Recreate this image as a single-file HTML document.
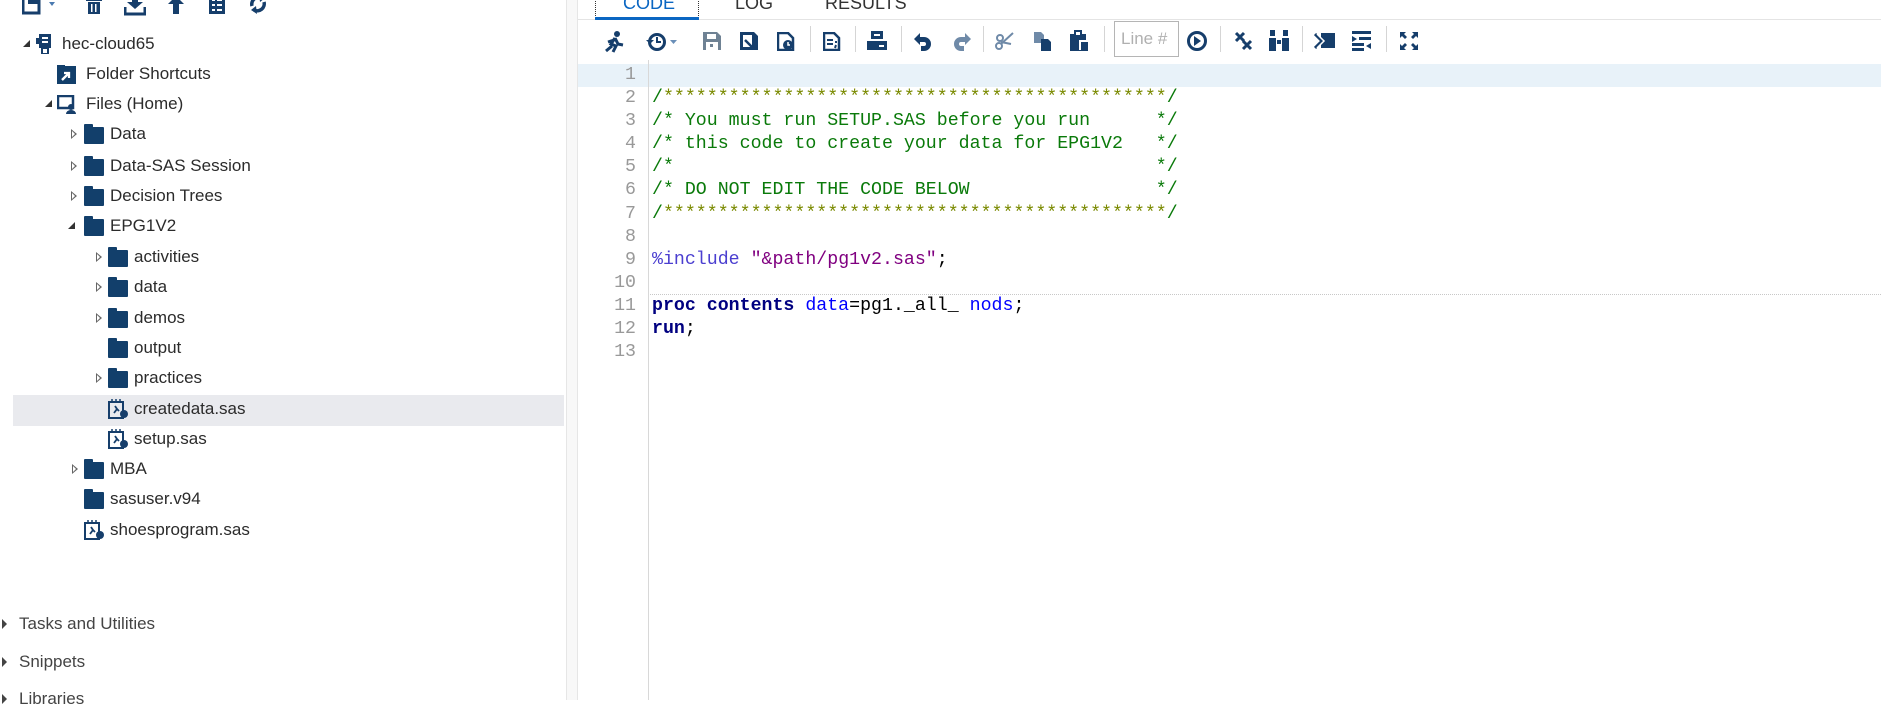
<!DOCTYPE html>
<html><head><meta charset="utf-8"><style>
*{margin:0;padding:0;box-sizing:border-box}
body{width:1881px;height:700px;overflow:hidden;background:#fff;position:relative;font-family:"Liberation Sans",sans-serif;color:#333}
.a{position:absolute}
.t{position:absolute;font-size:17px;line-height:20px;color:#2b2b2b;white-space:nowrap}
.ar{position:absolute;width:0;height:0}
.ro{border-top:5px solid transparent;border-bottom:5px solid transparent;border-left:6px solid #666}
.ro:after{content:"";position:absolute;left:-5px;top:-3px;border-top:3px solid transparent;border-bottom:3px solid transparent;border-left:3px solid #fff}
.rd{border-left:7px solid transparent;border-bottom:7px solid #333}
.fo{position:absolute;width:20px;height:17px;background:#123f6b;border-radius:1px}
.fo:before{content:"";position:absolute;left:0;top:-3px;width:9px;height:4px;background:#123f6b;border-radius:1px 1px 0 0}
.sep{position:absolute;top:26px;width:1px;height:26px;background:#d5d5d5}
.code{position:absolute;left:652px;top:64px;font-family:"Liberation Mono",monospace;font-size:18.25px;line-height:23.1px;white-space:pre;color:#000}
.gut{position:absolute;left:580px;top:64px;width:56px;text-align:right;font-family:"Liberation Mono",monospace;font-size:18.25px;line-height:23.1px;color:#999;white-space:pre}
.c{color:#0a7a0a}.s{color:#7a8a00}
.k{color:#000080;font-weight:bold}.b{color:#0000ff}.m{color:#4b3fd0}.q{color:#800080}
svg{position:absolute}
</style></head><body>

<div class="a" style="left:566px;top:0;width:12px;height:700px;background:#f8f8f8;border-left:1px solid #e6e6e6;border-right:1px solid #e6e6e6"></div>

<svg style="left:22px;top:-6px" width="40" height="22"><rect x="1" y="3" width="16" height="16" fill="none" stroke="#163e6b" stroke-width="3"/><rect x="6" y="0" width="10" height="10" fill="#163e6b"/><path d="M27 8 l6 0 l-3 4z" fill="#4a7ab0"/></svg>
<svg style="left:86px;top:-4px" width="16" height="20"><rect x="0" y="2" width="16" height="3" fill="#163e6b"/><rect x="2" y="6" width="12" height="12" fill="#163e6b"/><rect x="5" y="8" width="1.5" height="8" fill="#fff"/><rect x="9" y="8" width="1.5" height="8" fill="#fff"/></svg>
<svg style="left:124px;top:-6px" width="22" height="22"><path d="M8 0h6v8h5l-8 7-8-7h5z" fill="#163e6b"/><path d="M1 13v7h20v-7" fill="none" stroke="#163e6b" stroke-width="3"/></svg>
<svg style="left:167px;top:-6px" width="18" height="22"><path d="M9 2l8 8h-5v10h-6v-10h-5z" fill="#163e6b"/></svg>
<svg style="left:209px;top:-6px" width="16" height="22"><rect x="0" y="0" width="16" height="20" fill="#163e6b"/><rect x="3" y="5" width="3" height="2" fill="#fff"/><rect x="8" y="5" width="5" height="2" fill="#fff"/><rect x="3" y="10" width="3" height="2" fill="#fff"/><rect x="8" y="10" width="5" height="2" fill="#fff"/><rect x="3" y="15" width="3" height="2" fill="#fff"/><rect x="8" y="15" width="5" height="2" fill="#fff"/></svg>
<svg style="left:248px;top:-6px" width="20" height="22"><path d="M4 12a7 7 0 0 1 10-8M16 8a7 7 0 0 1 -10 8" fill="none" stroke="#163e6b" stroke-width="3.5"/><path d="M11 0l6 4-5 4z M9 20l-6-4 5-4z" fill="#163e6b"/></svg>

<div class="ar rd" style="left:23px;top:40px"></div>
<svg style="left:36px;top:34px" width="18" height="20"><rect x="3" y="0" width="12" height="14" fill="#163e6b"/><rect x="6" y="3" width="6" height="2" fill="#fff"/><rect x="6" y="7" width="6" height="2" fill="#fff"/><rect x="0" y="4" width="4" height="6" fill="#163e6b"/><rect x="6" y="14" width="6" height="6" fill="none" stroke="#163e6b" stroke-width="2"/></svg>
<div class="t" style="left:62px;top:34px">hec-cloud65</div>

<svg style="left:57px;top:65px" width="19" height="19"><rect width="19" height="18" y="1" fill="#123f6b"/><rect width="8" height="3" x="0" y="0" fill="#123f6b"/><path d="M5 15l7-7M7 8h5v5" stroke="#fff" stroke-width="2.3" fill="none"/></svg>
<div class="t" style="left:86px;top:64px">Folder Shortcuts</div>

<div class="ar rd" style="left:45px;top:100px"></div>
<svg style="left:57px;top:95px" width="20" height="19"><rect x="1" y="1" width="15" height="12" fill="none" stroke="#163e6b" stroke-width="2.5"/><circle cx="14" cy="12" r="3" fill="#163e6b"/><path d="M9 19a5 4 0 0 1 10 0z" fill="#163e6b"/></svg>
<div class="t" style="left:86px;top:94px">Files (Home)</div>

<div class="ar ro" style="left:71px;top:129px"></div><div class="fo" style="left:84px;top:127px"></div><div class="t" style="left:110px;top:124px">Data</div>
<div class="ar ro" style="left:71px;top:161px"></div><div class="fo" style="left:84px;top:159px"></div><div class="t" style="left:110px;top:156px">Data-SAS Session</div>
<div class="ar ro" style="left:71px;top:191px"></div><div class="fo" style="left:84px;top:189px"></div><div class="t" style="left:110px;top:186px">Decision Trees</div>
<div class="ar rd" style="left:68px;top:222px"></div><div class="fo" style="left:84px;top:219px"></div><div class="t" style="left:110px;top:216px">EPG1V2</div>

<div class="ar ro" style="left:96px;top:252px"></div><div class="fo" style="left:108px;top:250px"></div><div class="t" style="left:134px;top:247px">activities</div>
<div class="ar ro" style="left:96px;top:282px"></div><div class="fo" style="left:108px;top:280px"></div><div class="t" style="left:134px;top:277px">data</div>
<div class="ar ro" style="left:96px;top:313px"></div><div class="fo" style="left:108px;top:311px"></div><div class="t" style="left:134px;top:308px">demos</div>
<div class="fo" style="left:108px;top:341px"></div><div class="t" style="left:134px;top:338px">output</div>
<div class="ar ro" style="left:96px;top:373px"></div><div class="fo" style="left:108px;top:371px"></div><div class="t" style="left:134px;top:368px">practices</div>

<div class="a" style="left:13px;top:395px;width:551px;height:31px;background:#e9eaee"></div>
<svg style="left:108px;top:399px" width="20" height="20"><rect x="1" y="3" width="14" height="16" fill="none" stroke="#163e6b" stroke-width="2"/><path d="M4 0v4M8 0v4M12 0v4" stroke="#163e6b" stroke-width="1.5"/><path d="M7 7l2 3-3 4M9 10l2 2" stroke="#163e6b" stroke-width="1.8" fill="none"/><circle cx="16" cy="15" r="4" fill="#163e6b"/></svg>
<div class="t" style="left:134px;top:399px">createdata.sas</div>
<svg style="left:108px;top:429px" width="20" height="20"><rect x="1" y="3" width="14" height="16" fill="none" stroke="#163e6b" stroke-width="2"/><path d="M4 0v4M8 0v4M12 0v4" stroke="#163e6b" stroke-width="1.5"/><path d="M7 7l2 3-3 4M9 10l2 2" stroke="#163e6b" stroke-width="1.8" fill="none"/><circle cx="16" cy="15" r="4" fill="#163e6b"/></svg>
<div class="t" style="left:134px;top:429px">setup.sas</div>

<div class="ar ro" style="left:72px;top:464px"></div><div class="fo" style="left:84px;top:462px"></div><div class="t" style="left:110px;top:459px">MBA</div>
<div class="fo" style="left:84px;top:492px"></div><div class="t" style="left:110px;top:489px">sasuser.v94</div>
<svg style="left:84px;top:520px" width="20" height="20"><rect x="1" y="3" width="14" height="16" fill="none" stroke="#163e6b" stroke-width="2"/><path d="M4 0v4M8 0v4M12 0v4" stroke="#163e6b" stroke-width="1.5"/><path d="M7 7l2 3-3 4M9 10l2 2" stroke="#163e6b" stroke-width="1.8" fill="none"/><circle cx="16" cy="15" r="4" fill="#163e6b"/></svg>
<div class="t" style="left:110px;top:520px">shoesprogram.sas</div>

<div class="ar" style="left:2px;top:619px;border-top:5px solid transparent;border-bottom:5px solid transparent;border-left:5px solid #444"></div>
<div class="t" style="left:19px;top:614px;color:#444">Tasks and Utilities</div>
<div class="ar" style="left:2px;top:657px;border-top:5px solid transparent;border-bottom:5px solid transparent;border-left:5px solid #444"></div>
<div class="t" style="left:19px;top:652px;color:#444">Snippets</div>
<div class="ar" style="left:2px;top:694px;border-top:5px solid transparent;border-bottom:5px solid transparent;border-left:5px solid #444"></div>
<div class="t" style="left:19px;top:689px;color:#444">Libraries</div>

<div class="a" style="left:578px;top:19px;width:1303px;height:1px;background:#e4e4e4"></div>
<div class="a" style="left:595px;top:-2px;width:104px;height:20px;border:1px dotted #333;border-top:none"></div>
<div class="a" style="left:595px;top:17px;width:104px;height:3px;background:#0a66c2"></div>
<div class="t" style="left:623px;top:-7px;font-size:18px;color:#0a66c2">CODE</div>
<div class="t" style="left:735px;top:-7px;font-size:18px;color:#333">LOG</div>
<div class="t" style="left:825px;top:-7px;font-size:18px;color:#333">RESULTS</div>

<svg style="left:604px;top:31px" width="22" height="22"><circle cx="13" cy="3" r="3" fill="#163e6b"/><path d="M11 7l-4 6 5 2-3 6M11 7l3 6 5 1M10 9l-6 2M8 15l-6 5" stroke="#163e6b" stroke-width="3" fill="none"/></svg>
<svg style="left:646px;top:31px" width="40" height="22"><circle cx="11" cy="11" r="7.5" fill="none" stroke="#163e6b" stroke-width="3"/><path d="M0 9l4 4 4-4z" fill="#163e6b"/><path d="M11 6v5h4" stroke="#163e6b" stroke-width="2" fill="none"/><path d="M24 9h7l-3.5 4z" fill="#6a8fb8"/></svg>
<svg style="left:703px;top:32px" width="18" height="18"><path d="M0 0h14l4 4v14h-18z" fill="#6f8294"/><rect x="4" y="2" width="9" height="5" fill="#fff"/><rect x="3" y="10" width="12" height="8" fill="#fff"/><rect x="7" y="12" width="3" height="3" fill="#6f8294"/></svg>
<svg style="left:740px;top:32px" width="18" height="18"><path d="M0 0h14l4 4v14h-18z" fill="#163e6b"/><rect x="3" y="3" width="9" height="12" fill="#fff"/><path d="M5 8l4 4 5 5" stroke="#163e6b" stroke-width="2.5"/></svg>
<svg style="left:777px;top:32px" width="18" height="19"><path d="M1 1h10l5 5v12h-15z" fill="none" stroke="#163e6b" stroke-width="2.5"/><circle cx="11" cy="13" r="5" fill="#163e6b"/><path d="M11 10v3h2" stroke="#fff" stroke-width="1.5" fill="none"/></svg>
<div class="sep" style="left:810px"></div>
<svg style="left:823px;top:32px" width="18" height="19"><path d="M1 1h10l5 5v12h-15z" fill="none" stroke="#163e6b" stroke-width="2.5"/><path d="M4 8h6M4 12h6M13 9v2M13 13l-1 3" stroke="#163e6b" stroke-width="2"/></svg>
<div class="sep" style="left:855px"></div>
<svg style="left:867px;top:31px" width="20" height="20"><rect x="4" y="0" width="12" height="8" fill="#163e6b"/><rect x="7" y="3" width="6" height="2" fill="#fff"/><rect x="0" y="10" width="20" height="9" fill="#163e6b"/><rect x="12" y="14" width="5" height="2" fill="#fff"/></svg>
<div class="sep" style="left:901px"></div>
<svg style="left:914px;top:32px" width="20" height="19"><path d="M0 7l6-6v4h4a7 7 0 0 1 0 14h-3v-5h3a2 2 0 0 0 0-4h-4v3z" fill="#163e6b"/></svg>
<svg style="left:951px;top:32px" width="20" height="19"><path d="M20 7l-6-6v4h-4a7 7 0 0 0 0 14h3v-5h-3a2 2 0 0 1 0-4h4v3z" fill="#6f8aa8"/></svg>
<div class="sep" style="left:983px"></div>
<svg style="left:995px;top:32px" width="20" height="19"><circle cx="4" cy="14" r="3" fill="none" stroke="#6f8aa8" stroke-width="2"/><path d="M6 12l12-11M6 10l10 2" stroke="#6f8aa8" stroke-width="2"/><circle cx="5" cy="6" r="3" fill="none" stroke="#6f8aa8" stroke-width="2"/></svg>
<svg style="left:1034px;top:32px" width="18" height="19"><path d="M0 0h7l3 3v8h-10z" fill="#6f8aa8"/><path d="M7 7h7l3 3v9h-10z" fill="#163e6b"/></svg>
<svg style="left:1070px;top:30px" width="20" height="22"><rect x="0" y="4" width="16" height="17" fill="#163e6b"/><rect x="5" y="1" width="6" height="5" fill="#fff" stroke="#163e6b" stroke-width="2"/><rect x="9" y="10" width="9" height="10" fill="#fff"/><path d="M11 12h7v9h-7z" fill="#163e6b"/></svg>
<div class="sep" style="left:1104px"></div>
<div class="a" style="left:1114px;top:21px;width:65px;height:36px;border:1px solid #b5b5b5;color:#b0b0b0;font-size:17px;line-height:34px;padding-left:6px">Line #</div>
<svg style="left:1186px;top:30px" width="22" height="22"><circle cx="11" cy="11" r="8.5" fill="none" stroke="#163e6b" stroke-width="3"/><path d="M8 6l7 5-7 5z" fill="#163e6b"/></svg>
<div class="sep" style="left:1220px"></div>
<svg style="left:1234px;top:31px" width="20" height="20"><path d="M2 2l8 8M10 2l-8 8M9 10l8 8M17 10l-8 8" stroke="#163e6b" stroke-width="3"/></svg>
<svg style="left:1269px;top:30px" width="20" height="22"><rect x="1" y="0" width="5" height="6" fill="#163e6b"/><rect x="14" y="0" width="5" height="6" fill="#163e6b"/><rect x="0" y="8" width="7" height="13" fill="#163e6b"/><rect x="13" y="8" width="7" height="13" fill="#163e6b"/><rect x="8" y="10" width="4" height="4" fill="#163e6b"/></svg>
<div class="sep" style="left:1302px"></div>
<svg style="left:1314px;top:32px" width="22" height="18"><rect x="7" y="1" width="14" height="15" fill="#163e6b"/><path d="M1 2l7 7-7 7" stroke="#163e6b" stroke-width="3" fill="none"/><path d="M3 2l7 7-7 7" stroke="#fff" stroke-width="1.5" fill="none"/></svg>
<svg style="left:1352px;top:31px" width="20" height="20"><rect x="0" y="0" width="19" height="3" fill="#163e6b"/><path d="M0 5l5 3-5 3z" fill="#163e6b"/><rect x="7" y="6" width="12" height="3" fill="#163e6b"/><rect x="0" y="12" width="12" height="3" fill="#163e6b"/><path d="M19 12l-5 3 5 3z" fill="#163e6b"/><rect x="0" y="17" width="12" height="3" fill="#163e6b"/></svg>
<div class="sep" style="left:1386px"></div>
<svg style="left:1400px;top:32px" width="18" height="18"><path d="M0 0h6l-2 2 3 3-2 2-3-3-2 2zM18 0v6l-2-2-3 3-2-2 3-3-2-2zM0 18v-6l2 2 3-3 2 2-3 3 2 2zM18 18h-6l2-2-3-3 2-2 3 3 2-2z" fill="#163e6b"/></svg>

<div class="a" style="left:578px;top:64px;width:1303px;height:23px;background:#e8f2f9"></div>
<div class="a" style="left:648px;top:60px;width:1px;height:640px;background:#d8d8d8"></div>
<div class="a" style="left:650px;top:294px;width:1231px;height:0;border-top:1px dotted #c8c8c8"></div>
<div class="gut">1
2
3
4
5
6
7
8
9
10
11
12
13</div>
<div class="code">
<span class="c">/</span><span class="s">**********************************************</span><span class="c">/</span>
<span class="c">/* You must run SETUP.SAS before you run      */</span>
<span class="c">/* this code to create your data for EPG1V2   */</span>
<span class="c">/*                                            */</span>
<span class="c">/* DO NOT EDIT THE CODE BELOW                 */</span>
<span class="c">/</span><span class="s">**********************************************</span><span class="c">/</span>

<span class="m">%include</span> <span class="q">"&amp;path/pg1v2.sas"</span>;

<span class="k">proc contents</span> <span class="b">data</span>=pg1._all_ <span class="b">nods</span>;
<span class="k">run</span>;
</div>
</body></html>
